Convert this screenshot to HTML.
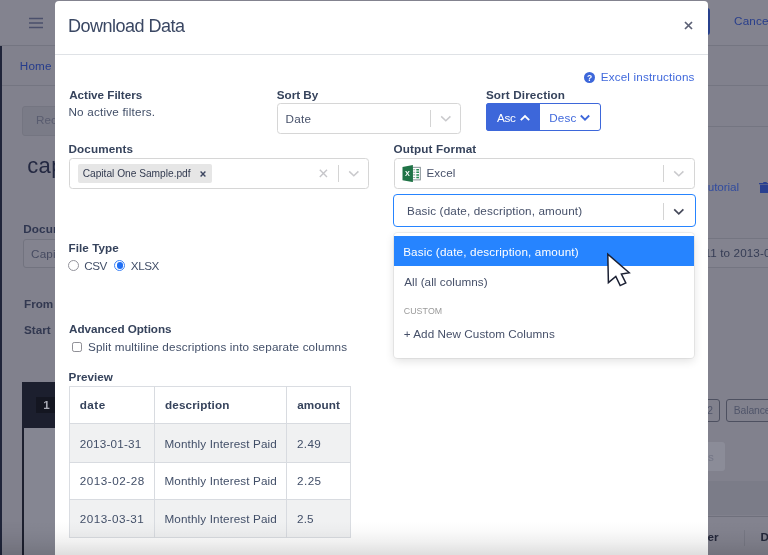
<!DOCTYPE html>
<html lang="en">
<head>
<meta charset="utf-8">
<title>Download Data</title>
<style>
*{box-sizing:border-box;margin:0;padding:0}
html,body{width:768px;height:555px;overflow:hidden}
body{position:relative;background:#81818d;font-family:"Liberation Sans",Arial,sans-serif;font-size:11.7px;color:#3c4b64;line-height:1}
.abs{position:absolute;white-space:nowrap}
.t{position:absolute;white-space:nowrap}
.hl{position:absolute;height:1px;background:#747581}
.sel{position:absolute;height:30.9px;border:1px solid #d6d6d6;border-radius:3.5px;background:#fff}
.sep{position:absolute;width:1.2px;background:#d4d4d4}
</style>
</head>
<body>
<div id="wrap" style="position:absolute;left:0;top:0;width:768px;height:555px;overflow:hidden;will-change:transform;filter:blur(.4px)">
<div aria-hidden="true">
<!-- dimmed page behind the modal -->
<div class="abs" style="left:0;top:0;width:768px;height:45px;background:#83838f"></div>
<div class="hl" style="left:0;top:45px;width:768px"></div>
<div class="abs" style="left:0;top:45.5px;width:2.1px;height:510px;background:#1f2439"></div>
<svg class="abs" style="left:29px;top:17px" width="14" height="12" viewBox="0 0 14 12"><path d="M0 1.6h14M0 5.900h14M0 10.600h14" stroke="#4b506c" stroke-width="1.500" fill="none"/></svg>
<div class="hl" style="left:2px;top:85px;width:766px"></div>
<div class="abs" style="left:22px;top:105.700px;width:40px;height:30px;background:#7a7b87;border:1px solid #747581;border-radius:3px"></div>
<div class="abs" style="left:22.700px;top:239px;width:40px;height:28.700px;background:#83838f;border:1px solid #72737f;border-radius:3px"></div>
<div class="abs" style="left:24px;top:428px;width:40px;height:130px;background:#858692"></div>
<div class="abs" style="left:22px;top:381.700px;width:40px;height:46.600px;background:#1c1f2e"></div>
<div class="abs" style="left:36px;top:396.700px;width:20px;height:16.600px;background:#141621"></div>
<div class="abs" style="left:22px;top:428px;width:2px;height:130px;background:#1c1f2e"></div>

<!-- right side of dimmed page -->
<div class="abs" style="left:700px;top:7.700px;width:9.900px;height:27px;background:#27408c;border-radius:3px"></div>
<div class="hl" style="left:708px;top:126px;width:60px"></div>
<svg class="abs" style="left:759px;top:181.500px" width="12" height="11" viewBox="0 0 12 11"><path d="M1 2.800h10v7.700a.5.5 0 0 1-.5.5h-9a.5.5 0 0 1-.5-.5zM0 .9h4l.6-.9h2.800l.6.9h4v1.300H0z" fill="#2a4090"/></svg>
<div class="abs" style="left:690px;top:238px;width:90px;height:30px;background:#83838f;border:1px solid #747581"></div>
<div class="abs" style="left:690px;top:398.900px;width:29.500px;height:22.700px;border:1px solid #4d5060;border-radius:3px"></div>
<div class="abs" style="left:725.800px;top:398.900px;width:60px;height:22.700px;border:1px solid #4d5060;border-radius:3px"></div>
<div class="abs" style="left:690px;top:442.300px;width:34.600px;height:28.400px;background:#8b8c98;border-radius:3px"></div>
<div class="abs" style="left:708px;top:480.800px;width:60px;height:34.700px;background:#7b7c88"></div>
<div class="abs" style="left:708px;top:516px;width:60px;height:40px;background:#83838f"></div>
<div class="hl" style="left:708px;top:515.500px;width:60px;background:#6f707c"></div>
<div class="abs" style="left:744px;top:530px;width:1px;height:16px;background:#777884"></div>
<div class="t" style="left:19.8px;top:58px;font-size:11.7px;line-height:15px;height:15px;color:#263c8c;letter-spacing:0.15px;">Home</div>
<div class="t" style="left:36px;top:112px;font-size:11.7px;line-height:15px;height:15px;color:#595c6f;">Rec</div>
<div class="t" style="left:27.3px;top:152px;font-size:22px;line-height:27px;height:27px;color:#232841;letter-spacing:0.3px;">cap</div>
<div class="t" style="left:23.3px;top:221px;font-size:11.7px;line-height:15px;height:15px;color:#2f3650;font-weight:bold;letter-spacing:0.1px;">Docur</div>
<div class="t" style="left:31px;top:246px;font-size:11.7px;line-height:15px;height:15px;color:#464b61;letter-spacing:0.2px;">Capi</div>
<div class="t" style="left:24px;top:296px;font-size:11.7px;line-height:15px;height:15px;color:#323850;font-weight:bold;">From</div>
<div class="t" style="left:24px;top:322px;font-size:11.7px;line-height:15px;height:15px;color:#323850;font-weight:bold;">Start</div>
<div class="t" style="left:43.3px;top:397px;font-size:11.7px;line-height:15px;height:15px;color:#a8aab4;font-weight:bold;">1</div>
<div class="t" style="left:734px;top:13px;font-size:11.7px;line-height:15px;height:15px;color:#283e8c;letter-spacing:0.2px;">Cancel</div>
<div class="t" style="left:704.6px;top:179px;font-size:11.7px;line-height:15px;height:15px;color:#324c9e;letter-spacing:-0.1px;">tutorial</div>
<div class="t" style="left:704.6px;top:245px;font-size:11.7px;line-height:15px;height:15px;color:#363d55;letter-spacing:0.1px;">11 to 2013-01</div>
<div class="t" style="left:707.3px;top:404px;font-size:10.2px;line-height:13px;height:13px;color:#50556a;">2</div>
<div class="t" style="left:733.7px;top:404px;font-size:10.4px;line-height:13px;height:13px;color:#50556a;letter-spacing:-0.1px;">Balance</div>
<div class="t" style="left:708px;top:449px;font-size:11.7px;line-height:15px;height:15px;color:#737686;">s</div>
<div class="t" style="left:707.5px;top:529px;font-size:11.7px;line-height:15px;height:15px;color:#23273a;font-weight:bold;">er</div>
<div class="t" style="left:760.5px;top:529px;font-size:11.7px;line-height:15px;height:15px;color:#23273a;font-weight:bold;">D</div>
</div>

<div role="dialog" aria-label="Download Data">
<!-- modal -->
<div class="abs" style="left:55.400px;top:1.200px;width:652.300px;height:560px;background:#fff;border-radius:4px 4px 0 0"></div>
<div class="abs" style="left:55.400px;top:54.100px;width:652.300px;height:1px;background:#dfe2e6"></div>
<svg class="abs" style="left:684.400px;top:20.500px" width="9" height="9" viewBox="0 0 9 9"><path d="M1 1l7 7M8 1l-7 7" stroke="#5b6075" stroke-width="1.700" fill="none"/></svg>

<!-- excel instructions icon -->
<svg class="abs" style="left:584px;top:71.900px" width="11" height="11" viewBox="0 0 11 11"><circle cx="5.500" cy="5.500" r="5.500" fill="#3d67da"/><text x="5.500" y="8.600" font-size="8.500" font-weight="bold" text-anchor="middle" fill="#fff" font-family="Liberation Sans, sans-serif">?</text></svg>

<!-- sort by -->
<div class="sel" style="left:277.300px;top:103.400px;width:183.600px"></div>
<div class="sep" style="left:429.800px;top:110px;height:17px"></div>
<svg class="abs" style="left:440px;top:114.500px" width="12" height="8" viewBox="0 0 12 8"><path d="M1.200 1.400l4.600 4.400 4.600-4.400" stroke="#c9c9cc" stroke-width="1.500" fill="none"/></svg>

<!-- sort direction -->
<div class="abs" style="left:485.800px;top:103.200px;width:114.900px;height:28.300px;border:1px solid #3d67da;border-radius:3px;background:#fff"></div>
<div class="abs" style="left:485.800px;top:103.200px;width:54px;height:28.300px;background:#3d67da;border-radius:3px 0 0 3px"></div>
<svg class="abs" style="left:518.700px;top:114px" width="12" height="8" viewBox="0 0 12 8"><path d="M1.800 6.200l4.200-4.200 4.200 4.200" stroke="#fff" stroke-width="1.800" fill="none"/></svg>
<svg class="abs" style="left:578.800px;top:113.800px" width="12" height="8" viewBox="0 0 12 8"><path d="M1.800 1.500l4.200 4.200 4.200-4.200" stroke="#3d67da" stroke-width="1.800" fill="none"/></svg>

<!-- documents -->
<div class="sel" style="left:68.800px;top:157.900px;width:300.700px"></div>
<div class="abs" style="left:77.700px;top:164px;width:134px;height:18.800px;background:#e6e6e6;border-radius:2px"></div>
<svg class="abs" style="left:200px;top:170.700px" width="6" height="6" viewBox="0 0 6 6"><path d="M.6.600l4.800 4.800M5.400.600L.6 5.400" stroke="#3c4660" stroke-width="1.400" fill="none"/></svg>
<svg class="abs" style="left:319.200px;top:169.300px" width="9" height="9" viewBox="0 0 9 9"><path d="M.8.800l7.200 7.200M8 .800L.8 8" stroke="#c6c6ca" stroke-width="1.400" fill="none"/></svg>
<div class="sep" style="left:338px;top:164.500px;height:17px"></div>
<svg class="abs" style="left:348px;top:170px" width="12" height="8" viewBox="0 0 12 8"><path d="M1.200 1.400l4.600 4.400 4.600-4.400" stroke="#c9c9cc" stroke-width="1.500" fill="none"/></svg>

<!-- output format -->
<div class="sel" style="left:394px;top:157.700px;width:301px"></div>
<svg class="abs" style="left:401.500px;top:164.500px" width="19" height="17" viewBox="0 0 19 17"><rect x="10.400" y="2.300" width="7.900" height="12.600" fill="#fff" stroke="#7b878c" stroke-width=".9"/><path d="M14.300 4.700h2.700M14.300 7.300h2.700M14.300 9.900h2.700M14.300 12.500h2.700" stroke="#2a8a55" stroke-width="1.500" fill="none"/><path d="M11.200 4.700h2M11.200 7.300h2M11.200 9.900h2M11.200 12.500h2" stroke="#8aa398" stroke-width="1.100" fill="none"/><path d="M.5 1.900L10.900.1v17L.5 15.200z" fill="#1f7346"/><text x="5.400" y="11.200" font-size="7.200" font-weight="bold" text-anchor="middle" fill="#fff" font-family="Liberation Sans, sans-serif">X</text></svg>
<div class="sep" style="left:663px;top:164.500px;height:17px"></div>
<svg class="abs" style="left:673px;top:170px" width="12" height="8" viewBox="0 0 12 8"><path d="M1.200 1.400l4.600 4.400 4.600-4.400" stroke="#c9c9cc" stroke-width="1.500" fill="none"/></svg>

<div class="sel" style="left:393.400px;top:193.900px;width:302.200px;height:33.100px;border:1.700px solid #2684ff;border-radius:4px"></div>
<div class="sep" style="left:663px;top:202.500px;height:17px"></div>
<svg class="abs" style="left:673px;top:208px" width="12" height="8" viewBox="0 0 12 8"><path d="M1.200 1.400l4.600 4.400 4.600-4.400" stroke="#45495a" stroke-width="1.700" fill="none"/></svg>

<!-- dropdown menu -->
<div class="abs" style="left:393.600px;top:232.600px;width:300.900px;height:125.600px;background:#fff;border-radius:3.500px;box-shadow:0 0 0 1px rgba(0,0,0,.055),0 3px 10px rgba(0,0,0,.12)"></div>
<div class="abs" style="left:393.600px;top:236.200px;width:300.900px;height:30.100px;background:#2684ff"></div>

<!-- file type radios -->
<div class="abs" style="left:68.400px;top:260px;width:11px;height:11px;border:1px solid #94949c;border-radius:50%;background:#fff"></div>
<div class="abs" style="left:114.200px;top:260px;width:11px;height:11px;border:1.100px solid #3b82f6;border-radius:50%;background:#fff"></div>
<div class="abs" style="left:116.500px;top:262.300px;width:6.400px;height:6.400px;border-radius:50%;background:#1f6ff5"></div>

<!-- checkbox -->
<div class="abs" style="left:72.100px;top:341.700px;width:10.400px;height:10.400px;border:1px solid #8f8f96;border-radius:2.200px;background:#fff"></div>

<!-- preview table -->
<div class="abs" style="left:69.400px;top:385.800px;width:281.600px;height:151.800px;background:#fff;border:1.200px solid #dadde2"></div>
<div class="abs" style="left:70.400px;top:424px;width:279.600px;height:37.600px;background:#f0f1f2"></div>
<div class="abs" style="left:70.400px;top:500px;width:279.600px;height:36.600px;background:#f0f1f2"></div>
<div class="abs" style="left:69.400px;top:422.600px;width:281.600px;height:1.600px;background:#d8dbe0"></div>
<div class="abs" style="left:69.400px;top:461.500px;width:281.600px;height:1px;background:#d8dbe0"></div>
<div class="abs" style="left:69.400px;top:499.200px;width:281.600px;height:1px;background:#d8dbe0"></div>
<div class="abs" style="left:154.100px;top:385.800px;width:1px;height:151.800px;background:#d8dbe0"></div>
<div class="abs" style="left:286.200px;top:385.800px;width:1px;height:151.800px;background:#d8dbe0"></div>

<div class="t" style="left:68.1px;top:15px;font-size:18px;line-height:22px;height:22px;color:#3a4763;letter-spacing:-0.517px;">Download Data</div>
<div class="t" style="left:600.7px;top:69px;font-size:11.7px;line-height:15px;height:15px;color:#4069dc;letter-spacing:0.165px;">Excel instructions</div>
<div class="t" style="left:69.15px;top:87px;font-size:11.7px;line-height:15px;height:15px;color:#36435c;font-weight:bold;letter-spacing:-0.027px;">Active Filters</div>
<div class="t" style="left:68.4px;top:104px;font-size:11.7px;line-height:15px;height:15px;color:#424f68;letter-spacing:0.206px;">No active filters.</div>
<div class="t" style="left:276.8px;top:87px;font-size:11.7px;line-height:15px;height:15px;color:#36435c;font-weight:bold;letter-spacing:-0.033px;">Sort By</div>
<div class="t" style="left:285.6px;top:111px;font-size:11.7px;line-height:15px;height:15px;color:#465069;letter-spacing:0.250px;">Date</div>
<div class="t" style="left:485.9px;top:87px;font-size:11.7px;line-height:15px;height:15px;color:#36435c;font-weight:bold;letter-spacing:0.138px;">Sort Direction</div>
<div class="t" style="left:497.0px;top:110px;font-size:11.7px;line-height:15px;height:15px;color:#fff;letter-spacing:-0.375px;">Asc</div>
<div class="t" style="left:549.2px;top:110px;font-size:11.7px;line-height:15px;height:15px;color:#4069dc;letter-spacing:0.183px;">Desc</div>
<div class="t" style="left:68.55px;top:141px;font-size:11.7px;line-height:15px;height:15px;color:#36435c;font-weight:bold;letter-spacing:0.112px;">Documents</div>
<div class="t" style="left:82.7px;top:167px;font-size:10.2px;line-height:13px;height:13px;color:#333b50;letter-spacing:-0.012px;">Capital One Sample.pdf</div>
<div class="t" style="left:393.6px;top:141px;font-size:11.7px;line-height:15px;height:15px;color:#36435c;font-weight:bold;letter-spacing:0.125px;">Output Format</div>
<div class="t" style="left:426.4px;top:165px;font-size:11.7px;line-height:15px;height:15px;color:#465069;letter-spacing:0.113px;">Excel</div>
<div class="t" style="left:407.0px;top:203px;font-size:11.7px;line-height:15px;height:15px;color:#465069;letter-spacing:0.133px;">Basic (date, description, amount)</div>
<div class="t" style="left:403.2px;top:244px;font-size:11.7px;line-height:15px;height:15px;color:#fff;letter-spacing:0.142px;">Basic (date, description, amount)</div>
<div class="t" style="left:404.2px;top:274px;font-size:11.7px;line-height:15px;height:15px;color:#465069;letter-spacing:0.059px;">All (all columns)</div>
<div class="t" style="left:403.7px;top:305px;font-size:8.8px;line-height:12px;height:12px;color:#9a9a9a;letter-spacing:0.110px;">CUSTOM</div>
<div class="t" style="left:403.7px;top:326px;font-size:11.7px;line-height:15px;height:15px;color:#465069;letter-spacing:0.059px;">+ Add New Custom Columns</div>
<div class="t" style="left:68.55px;top:240px;font-size:11.7px;line-height:15px;height:15px;color:#36435c;font-weight:bold;letter-spacing:0.056px;">File Type</div>
<div class="t" style="left:84.2px;top:258px;font-size:11.7px;line-height:15px;height:15px;color:#424f68;letter-spacing:-0.500px;">CSV</div>
<div class="t" style="left:130.85px;top:258px;font-size:11.7px;line-height:15px;height:15px;color:#424f68;letter-spacing:-0.483px;">XLSX</div>
<div class="t" style="left:69.05px;top:321px;font-size:11.7px;line-height:15px;height:15px;color:#36435c;font-weight:bold;letter-spacing:-0.053px;">Advanced Options</div>
<div class="t" style="left:88.0px;top:339px;font-size:11.7px;line-height:15px;height:15px;color:#424f68;letter-spacing:0.142px;">Split multiline descriptions into separate columns</div>
<div class="t" style="left:68.55px;top:369px;font-size:11.7px;line-height:15px;height:15px;color:#36435c;font-weight:bold;letter-spacing:0.033px;">Preview</div>
<div class="t" style="left:79.7px;top:397px;font-size:11.7px;line-height:15px;height:15px;color:#36435c;font-weight:bold;letter-spacing:0.483px;">date</div>
<div class="t" style="left:165.0px;top:397px;font-size:11.7px;line-height:15px;height:15px;color:#36435c;font-weight:bold;letter-spacing:0.135px;">description</div>
<div class="t" style="left:297.25px;top:397px;font-size:11.7px;line-height:15px;height:15px;color:#36435c;font-weight:bold;letter-spacing:0.070px;">amount</div>
<div class="t" style="left:79.7px;top:436px;font-size:11.7px;line-height:15px;height:15px;color:#424f68;letter-spacing:0.194px;">2013-01-31</div>
<div class="t" style="left:164.5px;top:436px;font-size:11.7px;line-height:15px;height:15px;color:#424f68;letter-spacing:0.125px;">Monthly Interest Paid</div>
<div class="t" style="left:297.0px;top:436px;font-size:11.7px;line-height:15px;height:15px;color:#424f68;letter-spacing:0.317px;">2.49</div>
<div class="t" style="left:79.7px;top:473px;font-size:11.7px;line-height:15px;height:15px;color:#424f68;letter-spacing:0.539px;">2013-02-28</div>
<div class="t" style="left:164.5px;top:473px;font-size:11.7px;line-height:15px;height:15px;color:#424f68;letter-spacing:0.125px;">Monthly Interest Paid</div>
<div class="t" style="left:297.0px;top:473px;font-size:11.7px;line-height:15px;height:15px;color:#424f68;letter-spacing:0.450px;">2.25</div>
<div class="t" style="left:79.7px;top:511px;font-size:11.7px;line-height:15px;height:15px;color:#424f68;letter-spacing:0.483px;">2013-03-31</div>
<div class="t" style="left:164.5px;top:511px;font-size:11.7px;line-height:15px;height:15px;color:#424f68;letter-spacing:0.125px;">Monthly Interest Paid</div>
<div class="t" style="left:297.0px;top:511px;font-size:11.7px;line-height:15px;height:15px;color:#424f68;letter-spacing:0.125px;">2.5</div>
</div>

<!-- mouse cursor -->
<svg class="abs" style="left:604px;top:250.500px" width="30" height="38" viewBox="0 0 30 38"><path d="M3.800 3.200l.6 28.400 7.400-6.200 4.400 9.200 5.600-2.800-4.400-8.800 7.800-1.200z" fill="#fff" stroke="#1b2033" stroke-width="1.500" stroke-linejoin="miter"/></svg>

<!-- bottom fade -->
<div class="abs" style="left:0;top:521px;width:768px;height:34px;background:linear-gradient(to bottom,rgba(0,0,0,0) 0%,rgba(0,0,0,.018) 30%,rgba(0,0,0,.06) 62%,rgba(0,0,0,.13) 100%)"></div>
</div>
</body>
</html>
